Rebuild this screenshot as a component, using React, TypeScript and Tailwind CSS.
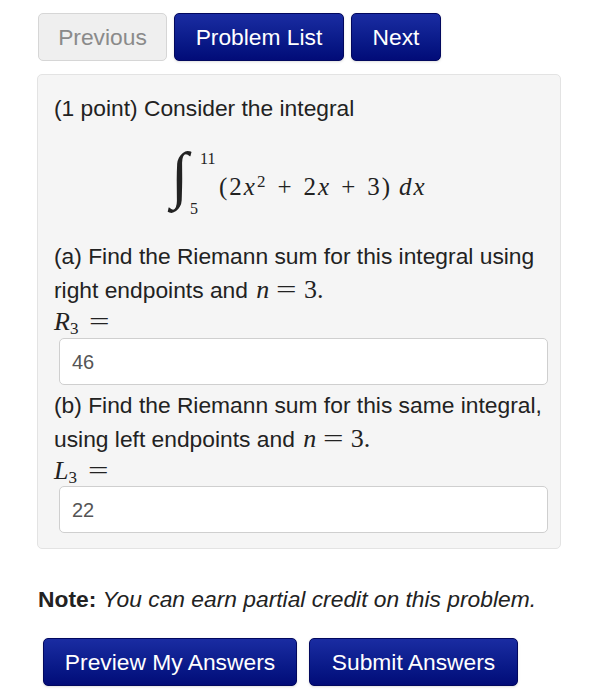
import React from "react";

const sans = { fontFamily: '"Liberation Sans", Arial, sans-serif' };
const serif = '[font-family:"Liberation_Serif","DejaVu_Serif",serif]';

function NavButton({ label, primary, className = "" }: { label: string; primary?: boolean; className?: string }) {
  return (
    <button
      className={
        primary
          ? `h-[48px] rounded-[5px] border border-[#02085e] bg-gradient-to-b from-[#1a2ca2] to-[#020b78] text-white text-[22.8px] shadow-sm ${className}`
          : `h-[48px] rounded-[5px] border border-[#d6d6d6] bg-[#efefef] text-[#8a8a8a] text-[22.8px] ${className}`
      }
    >
      {label}
    </button>
  );
}

function Eq({ className = "" }: { className?: string }) {
  return <span className={`inline-block scale-x-[1.4] ${className}`}>=</span>;
}

// inline "n = 3."
function NEq3() {
  return (
    <span className={`${serif} text-[26px] leading-none`}>
      <i className="ml-[2px]">n</i>
      <Eq className="mx-[10px]" />
      3.
    </span>
  );
}

function Lhs({ v }: { v: string }) {
  return (
    <p className={`${serif} text-[26px] leading-[30px]`}>
      <i>{v}</i>
      <sub className="text-[17px]">3</sub>
      <Eq className="ml-[14px]" />
    </p>
  );
}

function Answer({ value, className = "" }: { value: string; className?: string }) {
  return (
    <div className={`ml-[5px] h-[47px] rounded-[5px] border border-[#cfcfcf] bg-white px-[12px] flex items-center text-[20px] text-[#555] ${className}`}>
      {value}
    </div>
  );
}

export default function App() {
  return (
    <div className="w-[589px] h-[700px] bg-white text-[#222]" style={sans}>
      <div className="flex gap-[7px] pl-[38px] pt-[13px]">
        <NavButton label="Previous" className="w-[129px]" />
        <NavButton label="Problem List" primary className="w-[170px]" />
        <NavButton label="Next" primary className="w-[90px]" />
      </div>

      <div className="ml-[37px] mt-[13px] w-[524px] h-[475px] rounded-[5px] border border-[#e3e3e3] bg-[#f5f5f5] pl-[16px] pr-[12px] pt-[16px] text-[22.8px] leading-[34px]">
        <p>(1 point) Consider the integral</p>

        {/* display math: integral with limits */}
        <div className={`${serif} relative h-[84px] mt-[18px]`}>
          <span className="absolute left-[117px] top-[1px] text-[63px] leading-none italic">∫</span>
          <span className="absolute left-[146px] top-[8px] text-[16px] leading-none">11</span>
          <span className="absolute left-[136px] top-[58px] text-[16px] leading-none">5</span>
          <span className="absolute left-[165px] top-[31px] text-[25px] leading-none whitespace-nowrap tracking-[2px]">
            (2<i>x</i>
            <sup className="text-[17px]">2</sup>
            <span className="mx-[10px]">+</span>2<i>x</i>
            <span className="mx-[10px]">+</span>3)
            <i className="ml-[7px]">dx</i>
          </span>
        </div>

        <p className="mt-[12px]">(a) Find the Riemann sum for this integral using</p>
        <p>
          right endpoints and <NEq3 />
        </p>
        <Lhs v="R" />
        <Answer value="46" className="mt-[1px]" />

        <p className="mt-[3px]">(b) Find the Riemann sum for this same integral,</p>
        <p>
          using left endpoints and <NEq3 />
        </p>
        <Lhs v="L" />
        <Answer value="22" />
      </div>

      <p className="ml-[38px] mt-[33px] text-[22.8px]">
        <b>Note:</b> <i>You can earn partial credit on this problem.</i>
      </p>

      <div className="flex gap-[12px] pl-[43px] mt-[22px]">
        <NavButton label="Preview My Answers" primary className="w-[254px]" />
        <NavButton label="Submit Answers" primary className="w-[209px]" />
      </div>
    </div>
  );
}
